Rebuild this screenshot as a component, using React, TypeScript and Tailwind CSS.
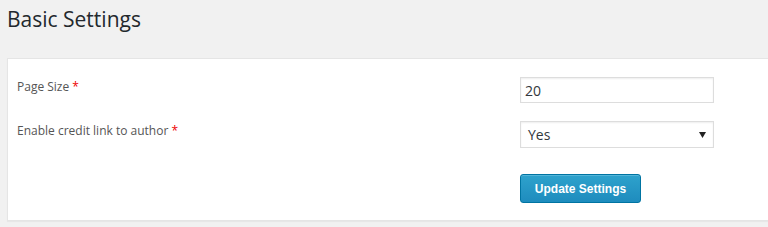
export default function App() {
  return (
    <div
      className="h-[227px] w-[768px] overflow-hidden bg-[#f1f1f1] pl-[7px] pt-[5px]"
      style={{ fontFamily: '"Open Sans", "Noto Sans", sans-serif' }}
    >
      <h1 className="text-[21px] leading-[28px] text-[#23282d] font-normal">Basic Settings</h1>

      <div className="mt-[25px] w-[790px] border border-[#e5e5e5] bg-white px-[9px] pt-[18px] pb-[17px] shadow-[0_1px_1px_rgba(0,0,0,0.04)]">
        <div className="grid grid-cols-[503px_auto] gap-y-[18px]">
          <label className="text-[12px] leading-[20px] text-[#555]">
            Page Size <span className="text-[#ee0000]">*</span>
          </label>
          <input
            defaultValue="20"
            className="h-[26px] w-[194px] border border-[#ddd] bg-white px-[4px] text-[14px] text-[#32373c] shadow-[inset_0_1px_2px_rgba(0,0,0,0.07)] outline-none"
          />

          <label className="text-[12px] leading-[20px] text-[#555]">
            Enable credit link to author <span className="text-[#ee0000]">*</span>
          </label>
          <div className="relative h-[27px] w-[194px] border border-[#ddd] bg-white shadow-[inset_0_1px_2px_rgba(0,0,0,0.07)]">
            <span className="absolute left-[7px] top-[3px] text-[14px] leading-[19px] text-[#32373c]">Yes</span>
            <svg className="absolute right-[7px] top-[10px]" width="7" height="6" viewBox="0 0 7 6">
              <path d="M0 0 H7 L3.5 6 Z" fill="#222" />
            </svg>
          </div>

          <div />
          <button
            className="mt-[8px] h-[29px] w-[121px] rounded-[3px] border border-[#0074a2] bg-gradient-to-b from-[#2ea2cc] to-[#1e8cbe] text-[12px] font-bold text-white shadow-[inset_0_1px_0_rgba(120,200,230,0.5)]"
            style={{ fontFamily: '"Liberation Sans", Arial, sans-serif' }}
          >
            Update Settings
          </button>
        </div>
      </div>
    </div>
  );
}
